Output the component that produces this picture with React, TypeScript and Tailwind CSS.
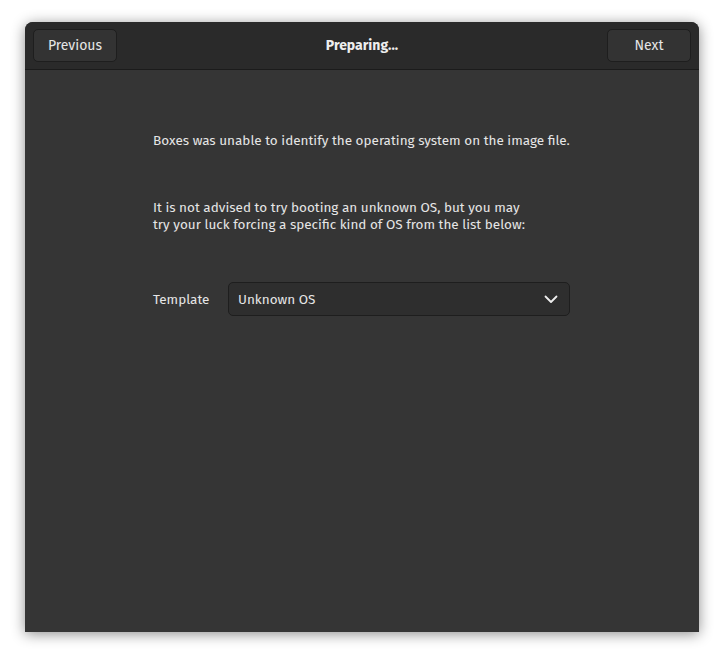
import React from "react";

export default function App() {
  const font = { fontFamily: '"Fira Sans", "Noto Sans", "Open Sans", sans-serif' };
  return (
    <div className="w-[724px] h-[661px] bg-white pt-[22px] pl-[25px]" style={font}>
      <div className="w-[674px] h-[610px] flex flex-col rounded-t-[8px] bg-[#353535] shadow-[0_2px_14px_rgba(0,0,0,0.45)] overflow-hidden">
        <div className="h-[48px] shrink-0 flex items-center justify-between px-[8px] bg-[#2a2a2a] border-b border-[#1b1b1b]">
          <button className="w-[84px] h-[33px] rounded-[5px] bg-[#333333] border border-[#1e1e1e] text-[14px] text-[#e6e6e6]">
            Previous
          </button>
          <div className="text-[14px] font-bold text-[#eeeeee]">Preparing...</div>
          <button className="w-[84px] h-[33px] rounded-[5px] bg-[#333333] border border-[#1e1e1e] text-[14px] text-[#e6e6e6]">
            Next
          </button>
        </div>
        <div className="flex-1 pl-[128px] pt-[62px] text-[13.5px] leading-[17px] text-[#e6e6e6]">
          <p>Boxes was unable to identify the operating system on the image file.</p>
          <p className="mt-[50px] w-[420px]">
            It is not advised to try booting an unknown OS, but you may
            <br />
            try your luck forcing a specific kind of OS from the list below:
          </p>
          <div className="mt-[49px] flex items-center">
            <span className="w-[75px]">Template</span>
            <div className="w-[342px] h-[34px] flex items-center justify-between pl-[9px] pr-[10px] rounded-[5px] bg-[#2e2e2e] border border-[#1e1e1e]">
              <span>Unknown OS</span>
              <svg width="16" height="16" viewBox="0 0 16 16" fill="none">
                <path d="M2.5 5.5 L8 11 L13.5 5.5" stroke="#eeeeee" strokeWidth="1.8" strokeLinecap="round" strokeLinejoin="round" />
              </svg>
            </div>
          </div>
        </div>
      </div>
    </div>
  );
}
